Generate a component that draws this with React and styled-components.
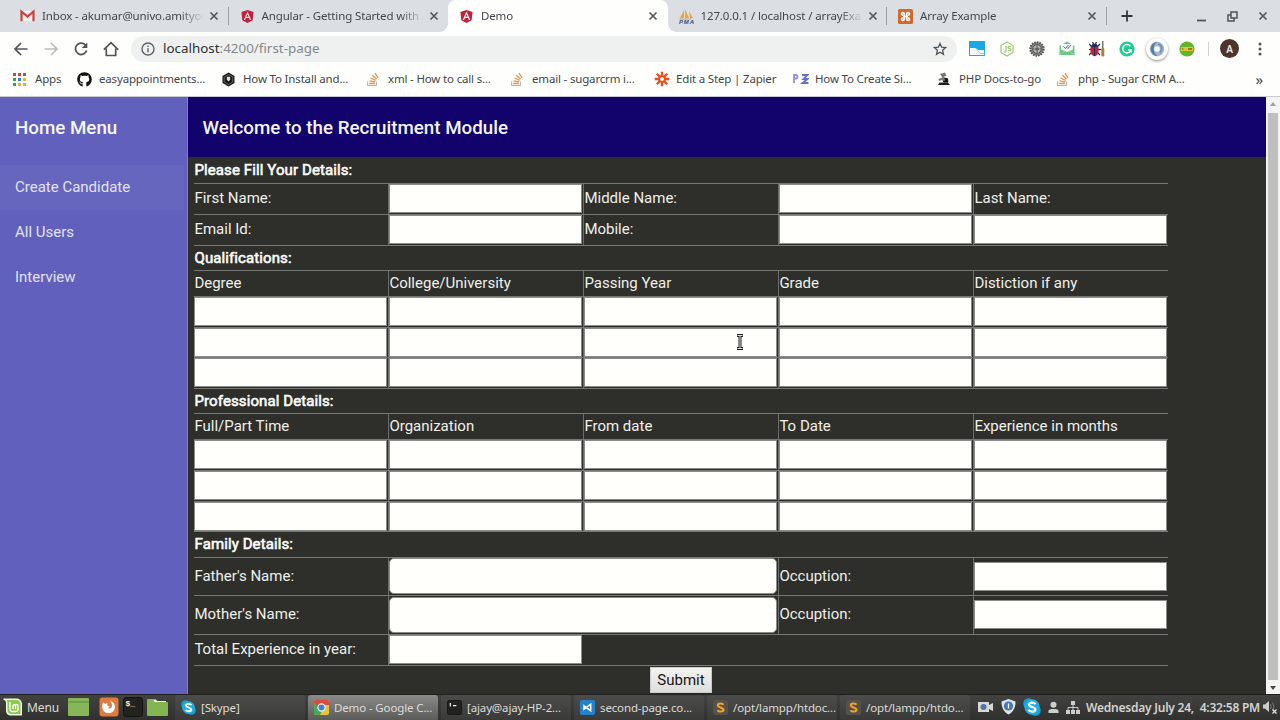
import React from "react";
import styled, { createGlobalStyle } from "styled-components";
import { FaAngular, FaGithub } from "react-icons/fa";

const GlobalStyle = createGlobalStyle`
* {
    box-sizing: border-box;
}
body {
    margin: 0;
    overflow: hidden;
}
`;

const Desktop = styled.div`
    width: 1280px;
    height: 720px;
    display: flex;
    flex-direction: column;
    overflow: hidden;
    font-family: "Noto Sans", sans-serif;
    font-size: 11.5px;
    color: #43464a;
    background: #fefefc;
    & svg {
        display: block;
        flex: none;
    }
`;

/* browser tabs */
const TabStrip = styled.div`
    display: flex;
    height: 32px;
    flex: none;
    padding-left: 9px;
    background: #dbdfe3;
`;

const Tab = styled.div`
    position: relative;
    display: flex;
    align-items: center;
    width: 219.5px;
    flex: none;
    height: 32px;
    padding-left: 11px;
    border-radius: 8px 8px 0 0;
    background: ${(props) => (props.$active ? "#fefefc" : "transparent")};
    &::before, &::after {
        content: "";
        display: ${(props) => (props.$active ? "block" : "none")};
        position: absolute;
        bottom: 0;
        width: 8px;
        height: 8px;
    }
    &::before {
        left: -8px;
        background: radial-gradient(circle at 0 0, transparent 7.5px, #fefefc 8px);
    }
    &::after {
        right: -8px;
        background: radial-gradient(circle at 100% 0, transparent 7.5px, #fefefc 8px);
    }
`;

const TabTitle = styled.span`
    width: 161px;
    margin-left: 7px;
    padding-bottom: 1px;
    white-space: nowrap;
    line-height: 18px;
    letter-spacing: -0.13px;
    mask-image: linear-gradient(to right, #000 138px, transparent 162px);
`;

const TabClose = styled.span`
    display: flex;
    margin-left: 6px;
`;

const TabLine = styled.span`
    width: 1px;
    height: 18px;
    margin-left: auto;
    background: ${(props) => (props.$show ? "#9da1a5" : "transparent")};
`;

const NewTab = styled.div`
    display: flex;
    align-items: center;
    padding-left: 14px;
`;

const WindowButtons = styled.div`
    display: flex;
    align-items: center;
    gap: 20px;
    margin-left: auto;
    padding-right: 12px;
`;

/* address bar */
const Toolbar = styled.div`
    display: flex;
    align-items: center;
    height: 33px;
    flex: none;
    padding-left: 13px;
`;

const NavButtons = styled.div`
    display: flex;
    align-items: center;
    gap: 14px;
    width: 118px;
`;

const AddressBar = styled.div`
    display: flex;
    align-items: center;
    width: 826px;
    flex: none;
    height: 26px;
    padding: 0 10px;
    border-radius: 13px;
    background: #eff1f0;
`;

const Url = styled.div`
    flex: 1;
    margin-left: 8px;
    padding-bottom: 1px;
    font-size: 13.4px;
    color: #84888b;
    & b {
        font-weight: 400;
        color: #2b2e31;
    }
`;

const Extensions = styled.div`
    display: flex;
    align-items: center;
    gap: 14px;
    margin-left: 12px;
`;

const ActiveExtension = styled.div`
    display: flex;
    align-items: center;
    justify-content: center;
    width: 22px;
    height: 22px;
    margin: 0 -3px;
    border-radius: 50%;
    box-shadow: 0 1px 3px rgba(0, 0, 0, 0.45);
`;

const Divider = styled.span`
    width: 1px;
    height: 14px;
    margin-left: -1px;
    background: #cfd1d3;
`;

const Avatar = styled.div`
    display: flex;
    align-items: center;
    justify-content: center;
    width: 19px;
    height: 19px;
    margin: 0 5px 0 -3px;
    border-radius: 50%;
    font-size: 10px;
    font-weight: 600;
    color: #f3e9e6;
    background: #4e342e;
`;

const Bookmarks = styled.div`
    display: flex;
    align-items: center;
    height: 31px;
    flex: none;
    padding: 0 0 3px 13px;
    letter-spacing: -0.17px;
`;

const Bookmark = styled.div`
    display: flex;
    align-items: center;
    width: ${(props) => props.$width}px;
    white-space: nowrap;
    & > span:last-child {
        margin-left: 6px;
        padding-bottom: 1px;
    }
`;

const BookmarkIcon = styled.span`
    display: flex;
    width: 16px;
    flex: none;
`;

const Overflow = styled.span`
    margin-left: auto;
    padding: 0 17px 1px 0;
    font-size: 15px;
`;

/* page */
const Page = styled.div`
    display: flex;
    flex: 1;
    min-height: 0;
    border-top: 1px solid #c9c9cf;
    font-family: Roboto, sans-serif;
    font-size: 15px;
    background: #2e2f2b;
`;

const Sidebar = styled.nav`
    width: 188px;
    flex: none;
    border-right: 1px solid #8080bd;
    background: #6160bc;
`;

const SidebarTitle = styled.h2`
    margin: 0;
    height: 68px;
    padding-left: 15px;
    font-size: 18.75px;
    font-weight: 500;
    line-height: 62px;
    color: #f6f5fd;
`;

const SidebarLink = styled.div`
    height: 45px;
    margin-right: 3px;
    padding-left: 15px;
    line-height: 45px;
    color: #e3e2f6;
    background: ${(props) => (props.$active ? "#6666bf" : "transparent")};
`;

const Content = styled.main`
    flex: 1;
    min-width: 0;
`;

const Banner = styled.header`
    height: 60px;
    padding-left: 14.5px;
    font-size: 18.75px;
    font-weight: 500;
    line-height: 62px;
    color: #f4f3fb;
    background: #12026c;
`;

const Form = styled.div`
    width: 974px;
    margin-left: 6px;
    color: #f0f0ec;
`;

const Row = styled.div`
    display: grid;
    grid-template-columns: 194px repeat(4, 195px);
    height: ${(props) => props.$height}px;
    border-top: 1px solid ${(props) => (props.$noLine ? "transparent" : "#777874")};
`;

const Cell = styled.div`
    display: flex;
    align-items: center;
    grid-column: span ${(props) => props.$span || 1};
    padding-bottom: 1px;
    white-space: nowrap;
    border-left: ${(props) => (props.$first ? "none" : "1px solid #6c6d69")};
`;

const Label = styled.label`
    padding: 0 0 1px 0.4px;
`;

const SectionTitle = styled.div`
    grid-column: 1 / -1;
    align-self: center;
    padding: 0 0 1px 0.5px;
    line-height: 22px;
    letter-spacing: 0.1px;
    color: #fbfbf8;
    -webkit-text-stroke: 0.6px #fbfbf8;
`;

const Field = styled.input`
    width: 193px;
    height: 29px;
    padding: 1px 2px;
    border: 1px solid #8b8c89;
    border-radius: 0;
    outline: none;
    background: #fffffc;
`;

const WideField = styled(Field)`
    width: 388px;
    height: 36px;
    border-radius: 5px;
`;

const SubmitRow = styled.div`
    display: flex;
    justify-content: center;
    padding-top: 1px;
    border-top: 1px solid #777874;
`;

const SubmitButton = styled.button`
    width: 62px;
    height: 26px;
    padding: 0;
    border: 1px solid #c9cac7;
    font-family: Roboto, sans-serif;
    font-size: 15px;
    color: #161616;
    background: linear-gradient(#f3f3f1, #dededc);
`;

const Scrollbar = styled.div`
    display: flex;
    flex-direction: column;
    align-items: center;
    justify-content: space-between;
    width: 14px;
    padding: 5px 0 4px;
    background: #f4f4f2;
`;

const Thumb = styled.div`
    width: 10px;
    height: 567px;
    background: #bfc0bd;
`;

/* desktop panel */
const Taskbar = styled.footer`
    display: flex;
    align-items: center;
    height: 26px;
    flex: none;
    border-top: 1px solid #1f201e;
    letter-spacing: -0.13px;
    background: linear-gradient(#424340, #30312f);
    color: #dcdcd8;
`;

const Launchers = styled.div`
    display: flex;
    align-items: center;
    width: 175px;
    flex: none;
    padding: 0 0 1px 3px;
`;

const MenuLabel = styled.span`
    width: 41px;
    margin-left: 4px;
    font-size: 12px;
`;

const LauncherIcons = styled.div`
    display: flex;
    align-items: center;
    & > :nth-child(2) { margin-left: 10px; }
    & > :nth-child(3) { margin-left: 4px; }
    & > :nth-child(4) { margin-left: 4px; }
`;

const Task = styled.div`
    display: flex;
    align-items: center;
    gap: 5px;
    width: 130px;
    height: 25px;
    flex: none;
    margin-right: 3px;
    padding: 0 0 1px 6px;
    border-radius: 3px 3px 0 0;
    white-space: nowrap;
    background: ${(props) => (props.$active
        ? "linear-gradient(#8b8c89, #5b5c59)"
        : "linear-gradient(#4c4d4a, #3a3b38)")};
`;

const Tray = styled.div`
    display: flex;
    align-items: center;
    gap: 7px;
    padding: 0 0 1px 5px;
`;

const Clock = styled.span`
    width: 174px;
    flex: none;
    margin: 0 -4px 0 -1px;
    font-size: 12px;
    font-weight: 600;
    letter-spacing: -0.23px;
    white-space: pre;
    color: #d3d3cf;
`;

const Pointer = styled.svg`
    position: absolute;
    left: 735px;
    top: 334px;
`;

const CloseIcon = () => (
    <svg width="10" height="10" viewBox="0 0 10 10" stroke="#54585c" strokeWidth="1.7">
        <path d="M1.5 1.5l7 7M8.5 1.5l-7 7" />
    </svg>
);

const GmailIcon = () => (
    <svg width="15" height="14" viewBox="0 0 15 14">
        <path d="M1.5 2h12v10h-12z" fill="#f3eeee" />
        <path d="M1.5 12.2V2.5l6 5 6-5v9.7" fill="none" stroke="#c9413a" strokeWidth="2.2" />
    </svg>
);

const AngularIcon = () => <FaAngular size={15} color="#c3203a" />;

const PmaIcon = () => (
    <svg width="15" height="16" viewBox="0 0 15 16">
        <path d="M5 2v8H1zM6 1l4 9H6zM10 3l4 7h-3z" fill="#f0a23b" />
        <path d="M0 10.5h14l-2 1H1z" fill="#c9a574" />
        <text x="0" y="15.5" fontSize="6" fontWeight="700" fontStyle="italic" fontFamily="Liberation Sans" fill="#47496b" textLength="15">PMA</text>
    </svg>
);

const XamppIcon = () => (
    <svg width="15" height="15" viewBox="0 0 15 15">
        <rect width="15" height="15" rx="1.5" fill="#d06a2c" />
        <path d="M5.2 6.300C3 6.300 2.800 3.600 4.800 3.600S6.300 5.500 6.300 7.500 6.500 11.400 4.800 11.400 3 8.700 5.200 8.700M9.800 6.300c2.200 0 2.400-2.700.4-2.700S8.700 5.500 8.700 7.500s-.2 3.900 1.500 3.900 1.800-2.700-.4-2.700M5 7.500h5" fill="none" stroke="#fff" strokeWidth="1.600" />
    </svg>
);

const AppsIcon = () => (
    <svg width="13" height="13" viewBox="0 0 13 13">
        {["#d0443e", "#d0443e", "#c8434b", "#3d9b5b", "#3b78d8", "#e6b436", "#3d9b5b", "#e0b03a", "#e0b03a"].map((c, i) => (
            <rect key={i} x={(i % 3) * 5} y={Math.floor(i / 3) * 5} width="3" height="3" fill={c} />
        ))}
    </svg>
);

const HexIcon = () => (
    <svg width="15" height="15" viewBox="0 0 15 15">
        <path d="M7.500 .5l6 3.500v7l-6 3.500-6-3.500v-7z" fill="#171717" />
        <path d="M7.500 2.500l4.300 2.500v5l-4.300 2.500L3.200 10V5z" fill="none" stroke="#777" strokeWidth=".8" />
        <path d="M5.800 4.800h3.400v3L7.500 9.500 5.800 7.800z" fill="#ddd" />
    </svg>
);

const StackIcon = () => (
    <svg width="14" height="15" viewBox="0 0 14 15" fill="none">
        <path d="M1.600 9.500v4h8.800v-4" stroke="#b9b3aa" strokeWidth="1.200" />
        <path d="M3.300 11.500h5.500M3.500 8.800l5.600 1M4.500 6l5.200 2.400M6.300 3.300l4.300 3.700M9 1.200l3 4.700" stroke="#e3924f" strokeWidth="1.300" />
    </svg>
);

const ZapierIcon = () => (
    <svg width="16" height="16" viewBox="0 0 16 16" stroke="#f04f1b" strokeWidth="2.300">
        <path d="M8 .7v4.500M8 10.800v4.500M.7 8h4.500M10.800 8h4.500M2.800 2.800l3.300 3.300M9.900 9.900l3.300 3.300M13.200 2.800L9.900 6.100M6.100 9.900l-3.300 3.300" />
        <circle cx="8" cy="8" r="2.800" fill="none" strokeWidth="1.800" />
    </svg>
);

const PzIcon = () => (
    <svg width="16" height="12" viewBox="0 0 16 12" fill="none" stroke="#6570c8" strokeWidth="1.800">
        <path d="M1 10V2h1.700c2.300 0 2.300 3.500 0 3.500H1.500" stroke="#8d94d6" />
        <path d="M9 2h5.500L10.500 6h4L9.500 10h6" />
    </svg>
);

const StatueIcon = () => (
    <svg width="14" height="14" viewBox="0 0 14 14">
        <path d="M3 2l5-1.500 1.500 3-3 1.500 4.500 1.500.5 3.500H7l-2-2-3 1-.5-2 4-1.500z" fill="#777" />
        <path d="M1 13l1.500-2.500h8.500l2 2.500z" fill="#222" />
        <path d="M7 6l4 .5v4H7l-1.500-1.500 3-.5z" fill="#111" />
    </svg>
);

const BackIcon = ({ color, flip }) => (
    <svg width="16" height="16" viewBox="0 0 16 16" fill="none" stroke={color} strokeWidth="1.700" transform={flip ? "scale(-1 1)" : undefined}>
        <path d="M14.500 8H2.500M8 2L2 8l6 6" />
    </svg>
);

const ReloadIcon = () => (
    <svg width="16" height="16" viewBox="0 0 16 16">
        <path d="M12.800 4.500A5.700 5.700 0 1 0 13.600 9.500" fill="none" stroke="#505357" strokeWidth="1.800" />
        <path d="M14.300 1.500v5.500H8.800z" fill="#505357" />
    </svg>
);

const HomeIcon = () => (
    <svg width="16" height="16" viewBox="0 0 16 16" fill="none" stroke="#505357" strokeWidth="1.700">
        <path d="M.8 8.600L8 1.600l7.200 7M3.300 7.500v7h9.400v-7" />
    </svg>
);

const InfoIcon = () => (
    <svg width="14" height="14" viewBox="0 0 14 14" fill="none" stroke="#5d6165" strokeWidth="1.400">
        <circle cx="7" cy="7" r="6" />
        <path d="M7 6.200v4M7 3.500v1.500" />
    </svg>
);

const StarIcon = () => (
    <svg width="14" height="14" viewBox="0 0 14 14" fill="none" stroke="#505357" strokeWidth="1.300">
        <path d="M7 1.500l1.600 3.700 4 .4-3 2.700.9 4L7 10.200l-3.500 2.100.9-4-3-2.700 4-.4z" />
    </svg>
);

const PanelExt = () => (
    <svg width="16" height="15" viewBox="0 0 16 15">
        <rect x=".5" y=".5" width="15" height="14" fill="#f5fafc" stroke="#20a7e4" />
        <path d="M0 0h16v9H9L6.500 7H0z" fill="#17a8e8" />
        <path d="M8 8.500l3 4h4.500" fill="none" stroke="#8fcdec" />
    </svg>
);

const NodeExt = () => (
    <svg width="16" height="16" viewBox="0 0 16 16" fill="none" stroke="#9acb72" strokeWidth="1.200">
        <path d="M8 1l6 3.500v7L8 15l-6-3.500v-7z" />
        <path d="M7 5v5.200c0 1.200-1.800 1.200-2.300.3M12 6c-.8-1-3-.8-3 .5s3 .8 3 2.200-2.500 1.400-3.200.3" />
    </svg>
);

const GearExt = () => (
    <svg width="16" height="16" viewBox="0 0 16 16">
        <circle cx="8" cy="8" r="6.700" fill="#8a8a87" stroke="#50504e" strokeWidth="2" strokeDasharray="1.600 1" />
        <circle cx="8" cy="8" r="4.300" fill="#b9b9b6" stroke="#4b4b49" />
        <circle cx="8" cy="8" r="1.700" fill="#555" />
        <path d="M8 4v8M4 8h8" stroke="#666" />
    </svg>
);

const MailExt = () => (
    <svg width="16" height="15" viewBox="0 0 16 15">
        <path d="M.5 5L8 .5 15.500 5v9H.5z" fill="#6cc582" />
        <path d="M2 3h12v5.500L8 11 2 8.500z" fill="#f5f8f6" />
        <path d="M4.500 5.500l2 2 3-3.500M8 6.500l1 1 3-3.500" fill="none" stroke="#5860b0" />
        <path d="M.5 14L6 9.800M15.500 14L10 9.800" stroke="#9bd8aa" />
    </svg>
);

const BugExt = () => (
    <svg width="16" height="16" viewBox="0 0 16 16">
        <path d="M0 3l3 3M0 8.500h3M0 14l3-3M11 3L8 6M12 8.500H8M11 14l-3-3M3.500 1l1 2M7.500 1l-1 2" stroke="#222745" strokeWidth="1.200" />
        <ellipse cx="5.500" cy="9" rx="4.200" ry="6.200" fill="#c22436" />
        <path d="M1.800 6C2.500 1.500 8.500 1.500 9.200 6z" fill="#242b60" />
        <path d="M5.500 4v11" stroke="#242b60" />
        <path d="M13.800 0v8" stroke="#555" strokeWidth="1.200" />
        <rect x="12.300" y="7" width="3" height="8.500" rx="1.300" fill="#a68336" />
    </svg>
);

const GrammarlyExt = () => (
    <svg width="16" height="16" viewBox="0 0 16 16">
        <circle cx="8" cy="8" r="7.600" fill="#1fcb8f" />
        <path d="M11.300 5.200A4.200 4.200 0 1 0 12 9H9M12 9v2.500" fill="none" stroke="#fff" strokeWidth="1.500" />
    </svg>
);

const SwirlExt = () => (
    <svg width="16" height="16" viewBox="0 0 16 16" fill="none">
        <circle cx="8" cy="8" r="5" stroke="#a5b8ce" strokeWidth="4.500" />
        <path d="M8 .8C3 1.500.500 7 2.500 11c1 2.500 3.500 4.200 6 4.200C3.500 11.500 3.500 4.500 8 .8z" fill="#557da5" />
        <path d="M9 3c4 1 5 5 2 9" stroke="#6e93b8" strokeWidth="1.800" />
    </svg>
);

const GreenExt = () => (
    <svg width="16" height="16" viewBox="0 0 16 16">
        <circle cx="8" cy="8" r="7.600" fill="#62b32e" />
        <path d="M2 6h12v4H2z" fill="#e5c934" />
        <path d="M3 7l2.500 1L3 9M9 7h4v2H9z" fill="#a0742f" />
    </svg>
);

const MintIcon = () => (
    <svg width="20" height="20" viewBox="0 0 20 20">
        <path d="M.5 1.500H13c4 0 6 2.500 6 6v11H8c-3 0-5-2-5-5V6C3 4 2 3 .5 3z" fill="#eef2e7" />
        <path d="M3 3h10c3 0 4.500 1.500 4.500 4.500V17H8.500C6 17 4.500 15.500 4.500 13V6C4.500 4.500 4 3.500 3 3z" fill="#8cc84b" />
        <path d="M7 5v7c0 1.500 1 2.500 2.500 2.500h3c1.500 0 2.500-1 2.500-2.500V9c0-2-2.500-2-2.500 0v3M12.500 9c0-2-2.500-2-2.500 0v3" fill="none" stroke="#fff" strokeWidth="1.300" />
    </svg>
);

const GreenWindow = () => (
    <svg width="21" height="18" viewBox="0 0 21 18">
        <rect width="21" height="18" rx="1" fill="#87b658" />
        <path d="M0 4h21" stroke="#5f8a3b" />
    </svg>
);

const FirefoxIcon = () => (
    <svg width="20" height="20" viewBox="0 0 20 20">
        <rect x=".5" y=".5" width="19" height="19" rx="3" fill="#df7b3c" />
        <path d="M4 5l2 2c1-1 2-1 3-1-1 1-1 2 0 3l2 .5-2 1.500c2 1.500 4 0 4-2.500 0-1.500-.5-3-2-4.500 4 1 6 4.500 4.500 8.500-2 5-10 5-12-.5C3 9.500 3.500 7 4 5z" fill="#fff" />
    </svg>
);

const TerminalIcon = ({ size, prompt }) => (
    <svg width={size} height={size} viewBox="0 0 20 20">
        <rect x=".5" y=".5" width="19" height="19" rx="3" fill="#22231f" stroke="#10110f" />
        {prompt
            ? <text x="2.500" y="9" fontSize="8" fontWeight="700" fontFamily="Liberation Mono" fill="#eee">$_</text>
            : <path d="M4.500 4v4.500M8 7.500h4.500" stroke="#eee" strokeWidth="1.600" />}
    </svg>
);

const FolderIcon = () => (
    <svg width="21" height="18" viewBox="0 0 21 18">
        <path d="M1 5V1.500h8l1 1.500h9v3H1z" fill="#f1f3ec" />
        <path d="M0 5V2q0-1 1-1h5l1.500 3H20q1 0 1 1v12q0 1-1 1H1q-1 0-1-1z" fill="#84b553" />
    </svg>
);

const SkypeIcon = ({ size }) => (
    <svg width={size} height={size} viewBox="0 0 16 16">
        <circle cx="5" cy="5" r="4.800" fill="#149fd2" />
        <circle cx="11" cy="11" r="4.800" fill="#149fd2" />
        <circle cx="8" cy="8" r="6.800" fill="#20ade0" />
        <path d="M11 5.500C10 3.500 5.500 3.700 5.500 6S11 7.800 11 10.200s-4.800 2.400-6 .3" fill="none" stroke="#fff" strokeWidth="2" />
    </svg>
);

const ChromeIcon = () => (
    <svg width="15" height="15" viewBox="0 0 15 15">
        <rect width="15" height="15" rx="2" fill="#e5c63a" />
        <path d="M0 2q0-2 2-2h11q2 0 2 2v3H7L4 9 0 3z" fill="#d84a3d" />
        <path d="M0 3l5 7 3 1-2 4H2q-2 0-2-2z" fill="#4aa858" />
        <circle cx="7.500" cy="7.500" r="3.600" fill="#4583cf" stroke="#f4f4f4" strokeWidth="1.200" />
    </svg>
);

const CodeIcon = () => (
    <svg width="15" height="15" viewBox="0 0 15 15">
        <rect width="15" height="15" rx="2" fill="#2581c9" />
        <path d="M10.700 4.200v6.600L4 5.800v3.400z" fill="none" stroke="#fff" strokeWidth="1.500" />
    </svg>
);

const SublimeIcon = () => (
    <svg width="15" height="15" viewBox="0 0 15 15">
        <rect width="15" height="15" rx="2" fill="#55524b" />
        <path d="M10.500 4.800C9.500 2.800 4.800 3 4.800 5.300s5.700 2 5.700 4.400-4.800 2.400-6 .5" fill="none" stroke="#f3a22f" strokeWidth="2" />
    </svg>
);

const CameraIcon = () => (
    <svg width="16" height="12" viewBox="0 0 16 12">
        <path d="M0 1h11v3l4-2v8l-4-2v3H0z" fill="#d8d8d4" />
        <circle cx="5.500" cy="6" r="3" fill="#5274a8" />
    </svg>
);

const ShieldIcon = () => (
    <svg width="15" height="16" viewBox="0 0 15 16">
        <path d="M7.500 0l7 2.500c0 6-2 10.500-7 13-5-2.500-7-7-7-13z" fill="#e2e3e1" />
        <circle cx="7.500" cy="7" r="4.600" fill="#4378b8" />
        <path d="M7.500 4.500v5" stroke="#fff" strokeWidth="1.300" />
    </svg>
);

const PersonIcon = () => (
    <svg width="11" height="13" viewBox="0 0 12 13" fill="#cdcdc9">
        <circle cx="6" cy="3.500" r="3.300" />
        <path d="M.5 12.500V10Q1 8 4 8h4q3 0 3.500 2v2.500z" />
    </svg>
);

const NetworkIcon = () => (
    <svg width="14" height="13" viewBox="0 0 14 13" fill="#cdcdc9">
        <path d="M5 0h4v4H5zM0 9h4v4H0zM5 9h4v4H5zM10 9h4v4h-4z" />
        <path d="M7 4v5M2 9V6.500h10V9" fill="none" stroke="#cdcdc9" />
    </svg>
);

const VolumeIcon = () => (
    <svg width="15" height="14" viewBox="0 0 15 14">
        <path d="M0 4.500h2L6 1v11L2 8.500H0z" fill="#cdcdc9" />
        <path d="M7.500 4q1.500 2.500 0 5M9.500 2.500q3 4 0 8" fill="none" stroke="#797a77" />
        <path d="M9.500 9.500l4 4M13.500 9.500l-4 4" stroke="#e3e3df" strokeWidth="1.300" />
    </svg>
);

const tabs = [
    { title: "Inbox - akumar@univo.amityor", icon: <GmailIcon />, line: true },
    { title: "Angular - Getting Started with A", icon: <AngularIcon /> },
    { title: "Demo", icon: <AngularIcon />, active: true },
    { title: "127.0.0.1 / localhost / arrayExa", icon: <PmaIcon />, line: true },
    { title: "Array Example", icon: <XamppIcon />, line: true },
];

const bookmarks = [
    { label: "Apps", width: 64, icon: <AppsIcon /> },
    { label: "easyappointments...", width: 144, icon: <FaGithub size={15} color="#111" /> },
    { label: "How To Install and...", width: 145, icon: <HexIcon /> },
    { label: "xml - How to call s...", width: 144, icon: <StackIcon /> },
    { label: "email - sugarcrm i...", width: 144, icon: <StackIcon /> },
    { label: "Edit a Step | Zapier", width: 139, icon: <ZapierIcon /> },
    { label: "How To Create Si...", width: 144, icon: <PzIcon /> },
    { label: "PHP Docs-to-go", width: 119, icon: <StatueIcon /> },
    { label: "php - Sugar CRM A...", width: 140, icon: <StackIcon /> },
];

const tasks = [
    { label: "[Skype]", icon: <SkypeIcon size={15} /> },
    { label: "Demo - Google C...", icon: <ChromeIcon />, active: true },
    { label: "[ajay@ajay-HP-2...", icon: <TerminalIcon size={15} /> },
    { label: "second-page.co...", icon: <CodeIcon /> },
    { label: "/opt/lampp/htdoc...", icon: <SublimeIcon /> },
    { label: "/opt/lampp/htdo...", icon: <SublimeIcon /> },
];

const FormRow = ({ height, cells }) => (
    <Row $height={height}>
        {cells.map((cell, i) => (
            <Cell key={i} $first={i === 0} $span={cell === "wide" ? 2 : 1}>
                {cell === "" && <Field />}
                {cell === "wide" && <WideField />}
                {cell !== "" && cell !== "wide" && <Label>{cell}</Label>}
            </Cell>
        ))}
    </Row>
);

const Heading = ({ height, noLine, children }) => (
    <Row $height={height} $noLine={noLine}>
        <SectionTitle>{children}</SectionTitle>
    </Row>
);

const empty = ["", "", "", "", ""];

const CandidateForm = () => (
    <Form>
        <Heading height={26} noLine>Please Fill Your Details:</Heading>
        <FormRow height={31} cells={["First Name:", "", "Middle Name:", "", "Last Name:"]} />
        <FormRow height={31} cells={["Email Id:", "", "Mobile:", "", ""]} />
        <Heading height={25}>Qualifications:</Heading>
        <FormRow height={26} cells={["Degree", "College/University", "Passing Year", "Grade", "Distiction if any"]} />
        <FormRow height={31} cells={empty} />
        <FormRow height={30} cells={empty} />
        <FormRow height={31} cells={empty} />
        <Heading height={25}>Professional Details:</Heading>
        <FormRow height={26} cells={["Full/Part Time", "Organization", "From date", "To Date", "Experience in months"]} />
        <FormRow height={31} cells={empty} />
        <FormRow height={31} cells={empty} />
        <FormRow height={30} cells={empty} />
        <Heading height={26}>Family Details:</Heading>
        <FormRow height={38} cells={["Father's Name:", "wide", "Occuption:", ""]} />
        <FormRow height={39} cells={["Mother's Name:", "wide", "Occuption:", ""]} />
        <FormRow height={31} cells={["Total Experience in year:", ""]} />
        <SubmitRow>
            <SubmitButton>Submit</SubmitButton>
        </SubmitRow>
    </Form>
);

const Browser = () => (
    <>
        <TabStrip>
            {tabs.map((tab) => (
                <Tab key={tab.title} $active={tab.active}>
                    {tab.icon}
                    <TabTitle>{tab.title}</TabTitle>
                    <TabClose><CloseIcon /></TabClose>
                    <TabLine $show={tab.line} />
                </Tab>
            ))}
            <NewTab>
                <svg width="12" height="12" viewBox="0 0 12 12" stroke="#34373a" strokeWidth="1.800">
                    <path d="M6 .5v11M.5 6h11" />
                </svg>
            </NewTab>
            <WindowButtons>
                <svg width="11" height="11" viewBox="0 0 11 11"><path d="M1 9.500h9" stroke="#505357" strokeWidth="1.800" /></svg>
                <svg width="11" height="11" viewBox="0 0 11 11" fill="none" stroke="#505357" strokeWidth="1.500">
                    <path d="M4 1h6v6H4zM4 4H1v6h6V7" />
                </svg>
                <CloseIcon />
            </WindowButtons>
        </TabStrip>
        <Toolbar>
            <NavButtons>
                <BackIcon color="#505357" />
                <BackIcon color="#b9bbbd" flip />
                <ReloadIcon />
                <HomeIcon />
            </NavButtons>
            <AddressBar>
                <InfoIcon />
                <Url><b>localhost</b>:4200/first-page</Url>
                <StarIcon />
            </AddressBar>
            <Extensions>
                <PanelExt />
                <NodeExt />
                <GearExt />
                <MailExt />
                <BugExt />
                <GrammarlyExt />
                <ActiveExtension><SwirlExt /></ActiveExtension>
                <GreenExt />
                <Divider />
                <Avatar>A</Avatar>
                <svg width="4" height="14" viewBox="0 0 4 14" fill="#505357">
                    <circle cx="2" cy="2" r="1.500" /><circle cx="2" cy="7" r="1.500" /><circle cx="2" cy="12" r="1.500" />
                </svg>
            </Extensions>
        </Toolbar>
        <Bookmarks>
            {bookmarks.map((item) => (
                <Bookmark key={item.label} $width={item.width}>
                    <BookmarkIcon>{item.icon}</BookmarkIcon>
                    <span>{item.label}</span>
                </Bookmark>
            ))}
            <Overflow>»</Overflow>
        </Bookmarks>
    </>
);

const App = () => (
    <Desktop>
        <GlobalStyle />
        <Browser />
        <Page>
            <Sidebar>
                <SidebarTitle>Home Menu</SidebarTitle>
                <SidebarLink $active>Create Candidate</SidebarLink>
                <SidebarLink>All Users</SidebarLink>
                <SidebarLink>Interview</SidebarLink>
            </Sidebar>
            <Content>
                <Banner>Welcome to the Recruitment Module</Banner>
                <CandidateForm />
            </Content>
            <Scrollbar>
                <svg width="6" height="4" viewBox="0 0 6 4"><path d="M0 4l3-4 3 4z" fill="#a0a19e" /></svg>
                <Thumb />
                <svg width="6" height="4" viewBox="0 0 6 4"><path d="M0 0h6L3 4z" fill="#484945" /></svg>
            </Scrollbar>
        </Page>
        <Taskbar>
            <Launchers>
                <MintIcon />
                <MenuLabel>Menu</MenuLabel>
                <LauncherIcons>
                    <GreenWindow />
                    <FirefoxIcon />
                    <TerminalIcon size={20} prompt />
                    <FolderIcon />
                </LauncherIcons>
            </Launchers>
            {tasks.map((task) => (
                <Task key={task.label} $active={task.active}>
                    {task.icon}
                    {task.label}
                </Task>
            ))}
            <Tray>
                <CameraIcon />
                <ShieldIcon />
                <SkypeIcon size={18} />
                <PersonIcon />
                <NetworkIcon />
                <Clock>Wednesday July 24,  4:32:58 PM</Clock>
                <VolumeIcon />
            </Tray>
        </Taskbar>
        <Pointer width="10" height="16" viewBox="0 0 10 16" fill="none">
            <path d="M2 1.500h6M5 1.500v13M2 14.500h6" stroke="#222" strokeWidth="3" />
            <path d="M2.500 1.500h5M5 1.500v13M2.500 14.500h5" stroke="#ddd" strokeWidth="1" />
        </Pointer>
    </Desktop>
);

export default App;
